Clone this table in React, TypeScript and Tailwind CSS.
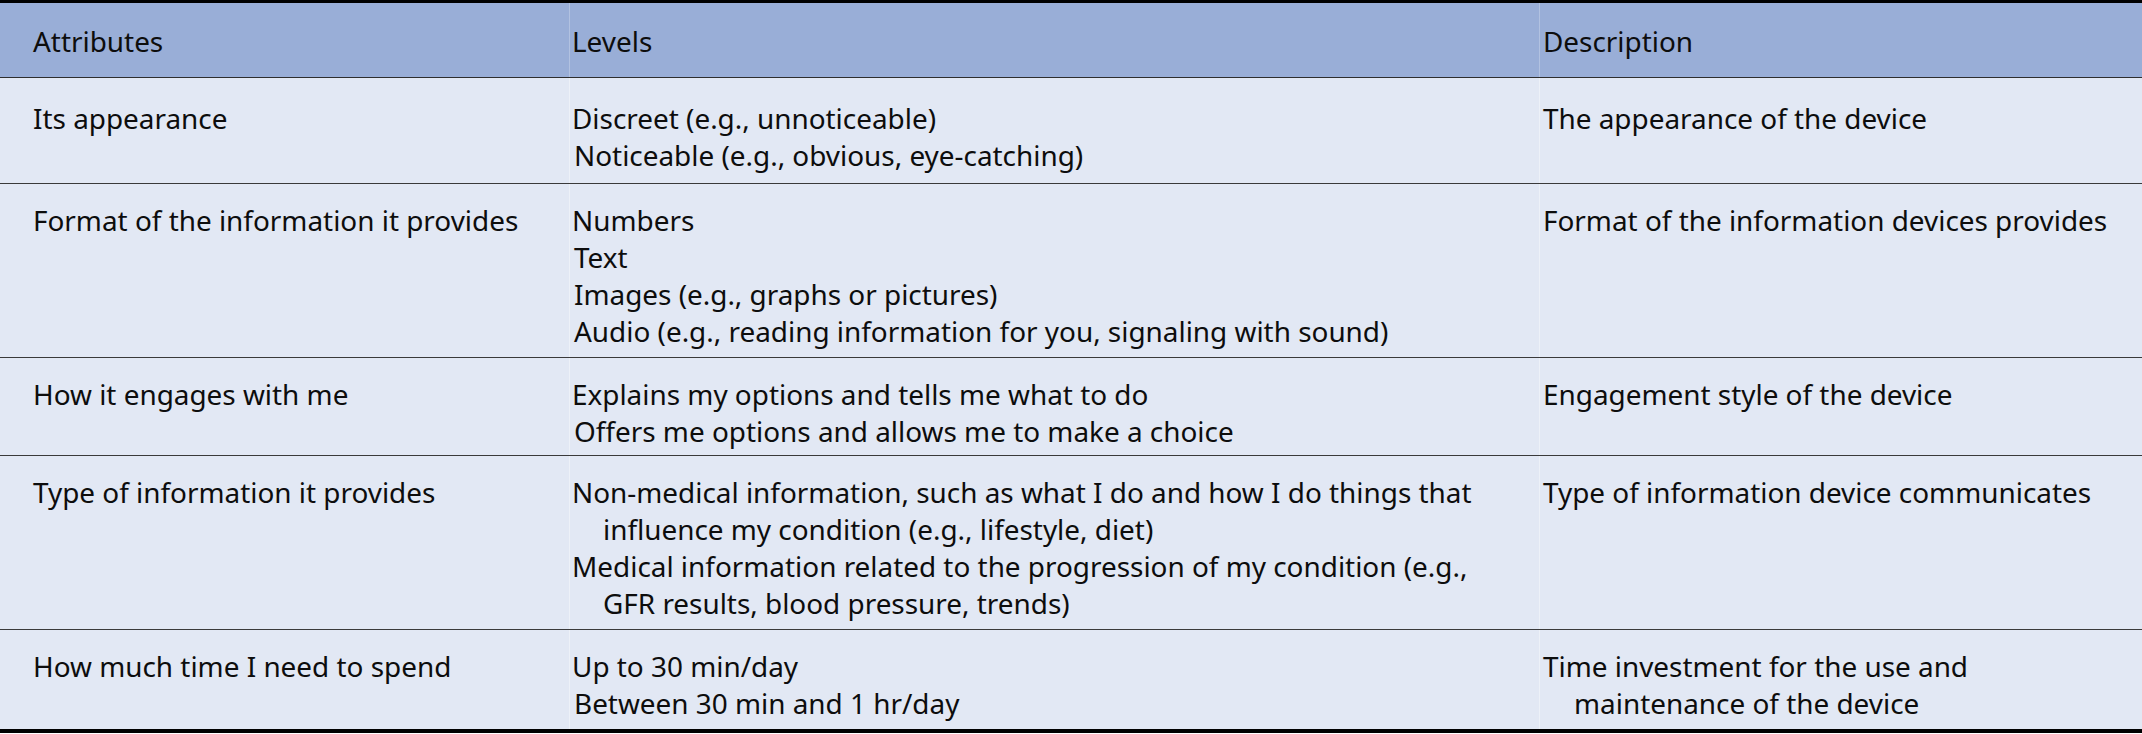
type Row = {
  attribute: string;
  levels: string[][];
  description: string[];
  pad: string;
};

// each level is a list of lines; continuation lines get a hanging indent
const rows: Row[] = [
  {
    attribute: 'Its appearance',
    levels: [['Discreet (e.g., unnoticeable)'], ['Noticeable (e.g., obvious, eye-catching)']],
    description: ['The appearance of the device'],
    pad: 'pt-[22px] pb-[9px]',
  },
  {
    attribute: 'Format of the information it provides',
    levels: [
      ['Numbers'],
      ['Text'],
      ['Images (e.g., graphs or pictures)'],
      ['Audio (e.g., reading information for you, signaling with sound)'],
    ],
    description: ['Format of the information devices provides'],
    pad: 'pt-[18px] pb-[7px]',
  },
  {
    attribute: 'How it engages with me',
    levels: [['Explains my options and tells me what to do'], ['Offers me options and allows me to make a choice']],
    description: ['Engagement style of the device'],
    pad: 'pt-[18px] pb-[5px]',
  },
  {
    attribute: 'Type of information it provides',
    levels: [
      ['Non-medical information, such as what I do and how I do things that', 'influence my condition (e.g., lifestyle, diet)'],
      ['Medical information related to the progression of my condition (e.g.,', 'GFR results, blood pressure, trends)'],
    ],
    description: ['Type of information device communicates'],
    pad: 'pt-[18px] pb-[7px]',
  },
  {
    attribute: 'How much time I need to spend',
    levels: [['Up to 30 min/day'], ['Between 30 min and 1 hr/day']],
    description: ['Time investment for the use and', 'maintenance of the device'],
    pad: 'pt-[18px] pb-[7px]',
  },
];

const Lines = ({ lines, nudge }: { lines: string[]; nudge?: boolean }) => (
  <div className={'whitespace-nowrap ' + (nudge ? 'pl-[2px]' : '')}>
    <div>{lines[0]}</div>
    {lines.slice(1).map((l) => (
      <div key={l} className="pl-[31px]">{l}</div>
    ))}
  </div>
);

export default function App() {
  return (
    <div
      className="w-[2142px] h-[734px] bg-white text-[#0d0d0d] text-[27.9px] leading-[37px]"
      style={{ fontFamily: '"Noto Sans", "Open Sans", sans-serif' }}
    >
      <div className="border-t-[3px] border-b-[4px] border-black">
        {/* header */}
        <div className="grid grid-cols-[569px_970px_1fr] bg-[#99aed7] border-b border-[#2e2e2e]">
          <div className="pl-[33px] pt-[20px] pb-[17px]">Attributes</div>
          <div className="pl-[2px] pt-[20px] pb-[17px] border-l border-white/25">Levels</div>
          <div className="pl-[3px] pt-[20px] pb-[17px] border-l border-white/25">Description</div>
        </div>

        {rows.map((r, i) => (
          <div
            key={r.attribute}
            className={
              'grid grid-cols-[569px_970px_1fr] bg-[#e2e8f4] ' +
              (i < rows.length - 1 ? 'border-b border-[#3a3a3a]' : '')
            }
          >
            <div className={'pl-[33px] ' + r.pad}>{r.attribute}</div>
            <div className={'pl-[2px] border-l border-white/40 ' + r.pad}>
              {r.levels.map((lv, j) => (
                <Lines key={j} lines={lv} nudge={j > 0 && lv.length === 1} />
              ))}
            </div>
            <div className={'pl-[3px] border-l border-white/40 ' + r.pad}>
              <Lines lines={r.description} />
            </div>
          </div>
        ))}
      </div>
    </div>
  );
}
